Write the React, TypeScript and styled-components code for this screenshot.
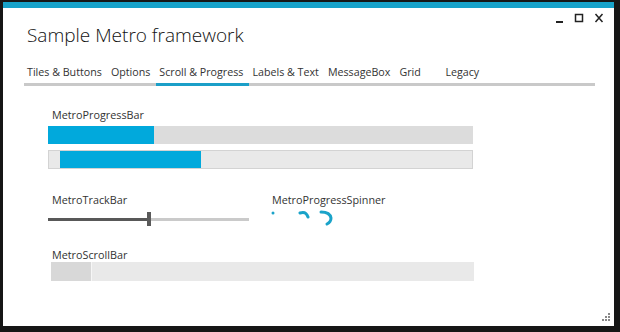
import React from "react";
import styled, { createGlobalStyle } from "styled-components";

const GlobalStyle = createGlobalStyle`
  html, body {
    margin: 0;
    padding: 0;
    background: #161616;
    width: 620px;
    height: 332px;
    overflow: hidden;
  }
  * { box-sizing: border-box; }
`;

const Window = styled.div({
  position: "relative",
  marginTop: 2,
  marginLeft: 3,
  width: 611,
  height: 324,
  background: "#ffffff",
  borderTop: "6px solid #17a2c9",
  fontFamily: '"Open Sans", "Noto Sans", sans-serif',
  color: "#333",
  padding: "0 0 0 21px",
});

const Controls = styled.div({
  position: "absolute",
  top: 4,
  right: 10,
  display: "flex",
  alignItems: "center",
  gap: 10,
});

const Title = styled.h1({
  margin: 0,
  padding: "13px 0 0 3px",
  fontWeight: 300,
  fontSize: 19,
  lineHeight: "28px",
  color: "#111",
});

const TabStrip = styled.div({
  display: "flex",
  width: 571,
  marginTop: 15,
  borderBottom: "3px solid #c9c9c9",
});

const Tab = styled.div<{ $active?: boolean; $wide?: boolean }>(({ $active, $wide }) => ({
  fontSize: 10.7,
  lineHeight: "16px",
  padding: "0 6px 3px 3px",
  marginBottom: -3,
  minWidth: $wide ? 46 : undefined,
  borderBottom: `3px solid ${$active ? "#1b9fc8" : "transparent"}`,
  color: "#333",
  whiteSpace: "nowrap",
}));

const Content = styled.div({
  padding: "21px 0 0 24px",
});

const Label = styled.div({
  fontSize: 10.8,
  lineHeight: "16px",
  marginLeft: 4,
  color: "#333",
});

const Bar = styled.div<{ $framed?: boolean }>(({ $framed }) => ({
  position: "relative",
  width: 425,
  height: $framed ? 19 : 18,
  background: $framed ? "#e9e9e9" : "#dcdcdc",
  border: $framed ? "1px solid #d3d3d3" : "none",
  marginTop: $framed ? 6 : 3,
}));

const Fill = styled.div({
  position: "absolute",
  top: 0,
  bottom: 0,
  background: "#01a9dc",
});

const Row = styled.div({
  display: "flex",
  marginTop: 23,
});

const Column = styled.div<{ $width?: number }>(({ $width }) => ({
  width: $width,
}));

const Track = styled.div({
  display: "flex",
  alignItems: "center",
  width: 201,
  height: 14,
  marginTop: 4,
});

const TrackPart = styled.div<{ $done?: boolean }>(({ $done }) => ({
  height: 3,
  background: $done ? "#585858" : "#cacaca",
  flex: $done ? "0 0 99px" : 1,
}));

const Thumb = styled.div({
  width: 4,
  height: 14,
  background: "#5a5a5a",
});

const ScrollLabel = styled(Label)({
  marginTop: 19,
});

const ScrollTrack = styled.div({
  display: "flex",
  width: 423,
  height: 19,
  marginTop: -1,
  marginLeft: 3,
  background: "#e9e9e9",
});

const ScrollThumb = styled.div({
  width: 41,
  height: "100%",
  background: "#d8d8d8",
  borderRight: "1px solid #f6f6f6",
});

const SpinnerIcon = styled.svg({
  display: "block",
  marginTop: 2,
  marginLeft: 2,
});

const Grip = styled.svg({
  position: "absolute",
  right: 3,
  bottom: 4,
});

const Spinner = () => (
  <SpinnerIcon width="70" height="18" viewBox="0 0 70 18">
    <circle cx="3" cy="3" r="1.5" fill="#1aa3c9" />
    <path d="M30 3 Q36 1 38 7" stroke="#1aa3c9" strokeWidth="3" fill="none" strokeLinecap="round" />
    <path d="M51 2 Q60 2 61 8 Q61 12 57 14" stroke="#1aa3c9" strokeWidth="3" fill="none" strokeLinecap="round" />
  </SpinnerIcon>
);

export default function App() {
  return (
    <>
      <GlobalStyle />
      <Window>
        <Controls>
          <svg width="9" height="12" viewBox="0 0 9 12">
            <rect x="1" y="9" width="7" height="2" fill="#222" />
          </svg>
          <svg width="10" height="12" viewBox="0 0 10 12">
            <rect x="1.5" y="2.5" width="7" height="7" fill="none" stroke="#222" strokeWidth="1.5" />
          </svg>
          <svg width="10" height="12" viewBox="0 0 10 12">
            <path d="M1.5 2 L8.5 10 M8.5 2 L1.5 10" stroke="#222" strokeWidth="1.5" />
          </svg>
        </Controls>
        <Title>Sample Metro framework</Title>
        <TabStrip>
          <Tab>Tiles &amp; Buttons</Tab>
          <Tab>Options</Tab>
          <Tab $active>Scroll &amp; Progress</Tab>
          <Tab>Labels &amp; Text</Tab>
          <Tab>MessageBox</Tab>
          <Tab $wide>Grid</Tab>
          <Tab>Legacy</Tab>
        </TabStrip>
        <Content>
          <Label>MetroProgressBar</Label>
          <Bar>
            <Fill style={{ left: 0, width: "25%" }} />
          </Bar>
          <Bar $framed>
            <Fill style={{ left: 11, width: 141 }} />
          </Bar>
          <Row>
            <Column $width={220}>
              <Label>MetroTrackBar</Label>
              <Track>
                <TrackPart $done />
                <Thumb />
                <TrackPart />
              </Track>
            </Column>
            <Column>
              <Label>MetroProgressSpinner</Label>
              <Spinner />
            </Column>
          </Row>
          <ScrollLabel>MetroScrollBar</ScrollLabel>
          <ScrollTrack>
            <ScrollThumb />
          </ScrollTrack>
        </Content>
        <Grip width="10" height="10" viewBox="0 0 10 10">
          <rect x="7" y="1" width="2" height="2" fill="#888" />
          <rect x="4" y="4" width="2" height="2" fill="#888" />
          <rect x="7" y="4" width="2" height="2" fill="#888" />
          <rect x="1" y="7" width="2" height="2" fill="#888" />
          <rect x="4" y="7" width="2" height="2" fill="#888" />
          <rect x="7" y="7" width="2" height="2" fill="#888" />
        </Grip>
      </Window>
    </>
  );
}
